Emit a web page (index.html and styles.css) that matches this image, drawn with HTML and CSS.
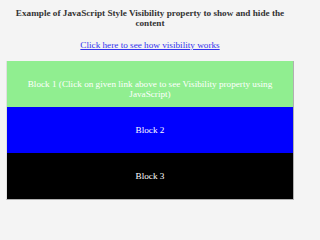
FILE: index.html
```html
<!DOCTYPE html>
<html>
<head>
<meta charset="utf-8">
<link rel="stylesheet" href="styles.css">
</head>
<body>
<div class="page">
  <h1 class="title">Example of JavaScript Style Visibility property to show and hide the content</h1>
  <p class="link-row"><a href="#" class="link">Click here to see how visibility works</a></p>
  <div class="blocks">
    <div class="block block-green">Block 1 (Click on given link above to see Visibility property using JavaScript)</div>
    <div class="block block-blue">Block 2</div>
    <div class="block block-black">Block 3</div>
  </div>
</div>
</body>
</html>
```
FILE: styles.css
```css
html, body {
  margin: 0;
  padding: 0;
  background: #f4f4f4;
}
body {
  font-family: "Liberation Serif", "Times New Roman", serif;
  font-size: 9.2px;
  line-height: 10px;
  color: #333;
}
.page {
  width: 300px;
  box-sizing: border-box;
  padding: 8px 6px 0;
}
.title {
  margin: 0 8px;
  font-size: 9.2px;
  line-height: 10px;
  font-weight: bold;
  text-align: center;
  color: #333;
}
.link-row {
  margin: 12px 0 0;
  text-align: center;
  line-height: 10px;
}
.link {
  color: #3333ee;
  text-decoration: underline;
}
.blocks {
  margin-top: 11px;
  border: 1px solid #b0b0b0;
  border-top: none;
  border-left-color: #e0e0e0;
}
.block {
  height: 46px;
  box-sizing: border-box;
  padding: 18px 18px 0;
  text-align: center;
  color: #fff;
}
.block-green { background: #90ee90; }
.block-blue { background: #0000ff; }
.block-black { background: #000; }
```
